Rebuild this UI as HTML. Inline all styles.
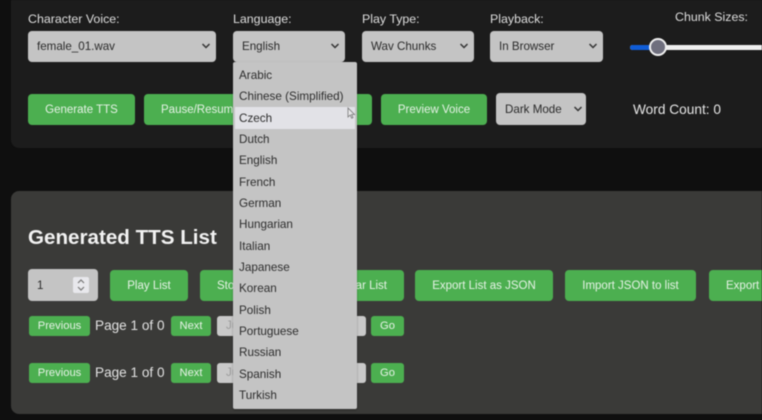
<!DOCTYPE html>
<html><head><meta charset="utf-8"><style>
html,body{margin:0;padding:0;width:762px;height:420px;overflow:hidden;background:#0f0f0f}
#r{position:absolute;left:0;top:0;width:762px;height:420px;overflow:hidden;font-family:"Liberation Sans",sans-serif;filter:blur(.5px)}
#r div{position:absolute;box-sizing:border-box;white-space:nowrap}
.p{background:#1c1c1c;border-radius:8px}
.l{color:#dedede;font-size:12.4px;line-height:16px}
.s{background:#c4c4c4;border-radius:4px;color:#2a2a2a;font-size:11.6px;line-height:32px;padding-left:9px;height:31px;top:31px}
.s svg,.d svg{position:absolute;right:5px;top:11px}
.b{background:#4caf50;border-radius:4px;color:#e6f2e6;font-size:11.5px;text-align:center;height:31px;line-height:32px;top:93.5px}
.n{background:#4caf50;border-radius:3px;color:#e6f2e6;font-size:11.2px;text-align:center;height:20px;line-height:21px}
.g{background:#c9c9c9;border-radius:3px;height:20px;color:#9a9a9a;font-size:11.5px;line-height:21px;padding-left:9px}
.t{color:#e2e2e2;font-size:13.6px;line-height:20px}
.o{left:6px;color:#2d2d2d;font-size:11.7px;line-height:21px;height:21px}
</style></head><body><div id="r">
<div class="p" style="left:11px;top:-10px;width:770px;height:158px"></div>
<div style="left:11px;top:191px;width:770px;height:223px;background:#3a3a38;border-radius:8px"></div>

<div class="l" style="left:28px;top:11px">Character Voice:</div>
<div class="l" style="left:233px;top:11px">Language:</div>
<div class="l" style="left:362px;top:11px">Play Type:</div>
<div class="l" style="left:490px;top:11px">Playback:</div>
<div class="l" style="left:675px;top:9px">Chunk Sizes:</div>

<div class="s" style="left:28px;width:188px">female_01.wav<svg width="10" height="8" viewBox="0 0 10 8"><path d="M1.5 2l3.5 3.5L8.500 2" fill="none" stroke="#333" stroke-width="1.500"/></svg></div>
<div class="s" style="left:233px;width:112px">English<svg width="10" height="8" viewBox="0 0 10 8"><path d="M1.5 2l3.5 3.5L8.500 2" fill="none" stroke="#333" stroke-width="1.500"/></svg></div>
<div class="s" style="left:362px;width:112px">Wav Chunks<svg width="10" height="8" viewBox="0 0 10 8"><path d="M1.5 2l3.5 3.500L8.500 2" fill="none" stroke="#333" stroke-width="1.500"/></svg></div>
<div class="s" style="left:490px;width:113px">In Browser<svg width="10" height="8" viewBox="0 0 10 8"><path d="M1.5 2l3.5 3.500L8.500 2" fill="none" stroke="#333" stroke-width="1.500"/></svg></div>

<div style="left:630px;top:45px;width:140px;height:5px;background:#efefef;border-radius:3px"></div>
<div style="left:630px;top:45px;width:24px;height:5px;background:#0f5cd6;border-radius:3px"></div>
<div style="left:649px;top:38px;width:18px;height:18px;background:#6f6f7e;border:2px solid #f0f0f0;border-radius:50%"></div>

<div class="b" style="left:28px;width:107px">Generate TTS</div>
<div class="b" style="left:144px;width:228px;text-align:left;padding-left:17px">Pause/Resume</div>
<div class="b" style="left:381px;width:106px">Preview Voice</div>
<div class="s" style="left:496px;width:90px;top:93px;height:32px;line-height:33px">Dark Mode<svg style="right:3px;top:12px" width="10" height="8" viewBox="0 0 10 8"><path d="M1.5 2l3.5 3.500L8.500 2" fill="none" stroke="#333" stroke-width="1.500"/></svg></div>
<div style="left:633px;top:101px;color:#e6e6e6;font-size:13.700px;line-height:18px">Word Count: 0</div>

<div style="left:28px;top:225.500px;color:#f2f2f2;font-size:20.600px;font-weight:bold;line-height:24px">Generated TTS List</div>

<div style="left:28px;top:269px;width:70px;height:32px;background:#c4c4c4;border-radius:4px;color:#2a2a2a;font-size:11.600px;line-height:33px;padding-left:9px">1
<div style="left:45px;top:8px;width:16px;height:16px;background:#e8e8ec;border-radius:2px"><svg width="16" height="16" viewBox="0 0 16 16" style="display:block"><path d="M5 6l3-3 3 3M5 10l3 3 3-3" fill="none" stroke="#777" stroke-width="1.200"/></svg></div></div>
<div class="b" style="left:110px;top:270px;width:78px">Play List</div>
<div class="b" style="left:200px;top:270px;width:80px;text-align:left;padding-left:17px">Stop List</div>
<div class="b" style="left:300px;top:270px;width:104px;text-align:right;padding-right:17px">Clear List</div>
<div class="b" style="left:415px;top:270px;width:138px">Export List as JSON</div>
<div class="b" style="left:565px;top:270px;width:131px">Import JSON to list</div>
<div class="b" style="left:709px;top:270px;width:100px;text-align:left;padding-left:17px">Export List</div>

<div class="n" style="left:29px;top:316px;width:61px">Previous</div>
<div class="t" style="left:95px;top:315.500px">Page 1 of 0</div>
<div class="n" style="left:171px;top:316px;width:40px">Next</div>
<div class="g" style="left:217px;top:316px;width:149px">Jump to page</div>
<div class="n" style="left:371px;top:316px;width:33px">Go</div>

<div class="n" style="left:29px;top:363px;width:61px">Previous</div>
<div class="t" style="left:95px;top:362.500px">Page 1 of 0</div>
<div class="n" style="left:171px;top:363px;width:40px">Next</div>
<div class="g" style="left:217px;top:363px;width:149px">Jump to page</div>
<div class="n" style="left:371px;top:363px;width:33px">Go</div>

<div class="d" style="left:233px;top:62px;width:124px;height:347px;background:#c4c4c4;border-radius:2px;box-shadow:0 1px 2px rgba(0,0,0,.3)">
<div style="left:2px;top:45px;width:120px;height:22px;background:#e2e2e7"></div>
<div class="o" style="top:3px">Arabic</div>
<div class="o" style="top:24.300px">Chinese (Simplified)</div>
<div class="o" style="top:45.700px">Czech</div>
<div class="o" style="top:67px">Dutch</div>
<div class="o" style="top:88.300px">English</div>
<div class="o" style="top:109.700px">French</div>
<div class="o" style="top:131px">German</div>
<div class="o" style="top:152.300px">Hungarian</div>
<div class="o" style="top:173.700px">Italian</div>
<div class="o" style="top:195px">Japanese</div>
<div class="o" style="top:216.300px">Korean</div>
<div class="o" style="top:237.700px">Polish</div>
<div class="o" style="top:259px">Portuguese</div>
<div class="o" style="top:280.300px">Russian</div>
<div class="o" style="top:301.700px">Spanish</div>
<div class="o" style="top:323px">Turkish</div>
<svg width="9" height="13" viewBox="0 0 9 13" style="position:absolute;left:114px;top:45px;right:auto"><path d="M1 1v9l2.200-2 1.500 3.200 1.300-.6L4.600 7.500H7.500z" fill="#e8e8ea" stroke="#777" stroke-width=".8"/></svg>
</div>
</div></body></html>
